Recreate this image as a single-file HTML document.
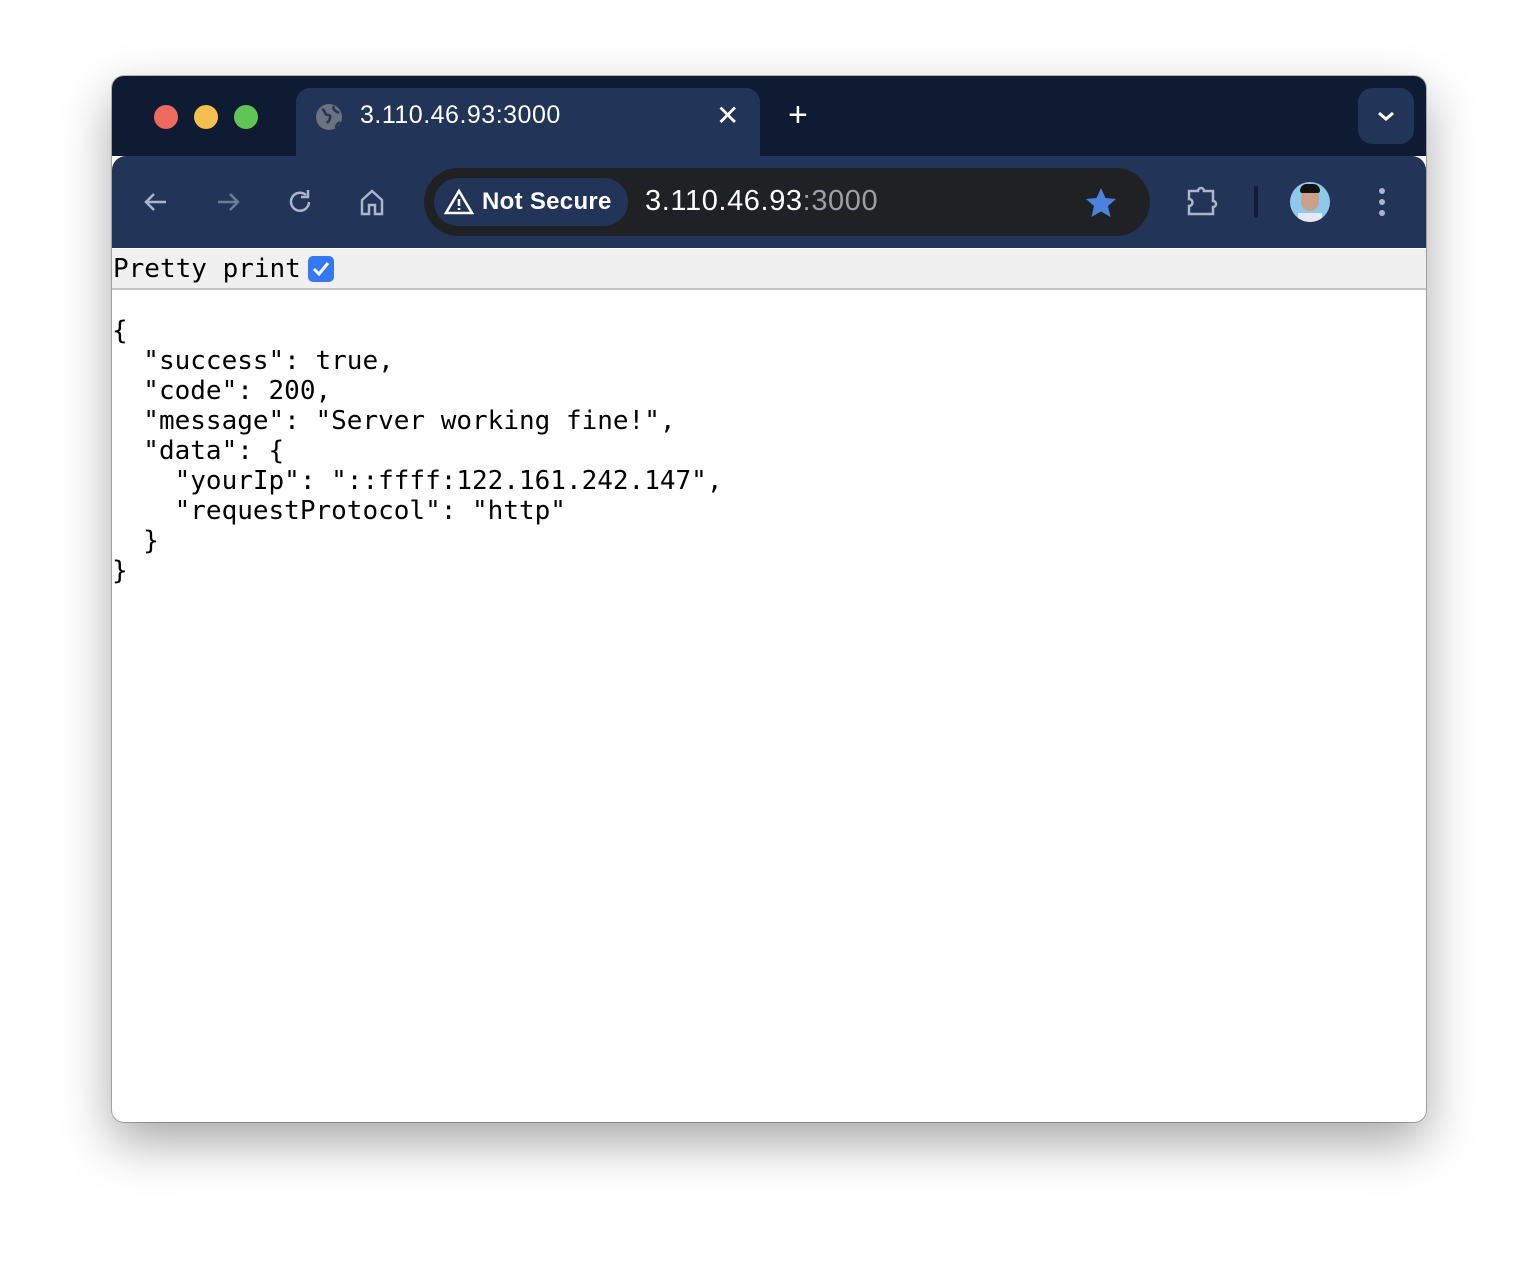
<!DOCTYPE html>
<html><head><style>
body{margin:0;width:1538px;height:1270px;background:#fff;position:relative;overflow:hidden;font-family:"Liberation Sans",sans-serif}
.win{position:absolute;left:112px;top:76px;width:1314px;height:1046px;border-radius:12px;overflow:hidden;box-shadow:0 20px 50px rgba(0,0,0,.35),0 0 0 1px rgba(0,0,0,.25);background:#fff}
.title{position:absolute;left:0;top:0;width:100%;height:80px;background:#0f1a33}
.dot{position:absolute;top:29px;width:24px;height:24px;border-radius:50%}
.tab{position:absolute;left:184px;top:12px;width:464px;height:80px;background:#223457;border-radius:14px 14px 0 0}
.tb{position:absolute;left:0;top:80px;width:100%;height:92px;background:#223457;border-radius:14px 14px 0 0}
.omni{position:absolute;left:312px;top:12px;width:726px;height:68px;background:#202124;border-radius:34px}
.ns{position:absolute;left:10px;top:10px;width:194px;height:48px;background:#223457;border-radius:24px;color:#fff;font-size:24px;font-weight:bold}
.pp{position:absolute;left:0;top:173px;width:100%;height:39px;background:#f0f0f0;border-bottom:2px solid #c4c4c4}
.mono{font-family:"DejaVu Sans Mono",monospace;font-size:26px;color:#000}
pre{margin:0;position:absolute;left:0;top:240px;line-height:30px}
</style></head><body>
<div class="win">
<div class="title">
<div class="dot" style="left:42px;background:#ed6a5e"></div>
<div class="dot" style="left:82px;background:#f5bf4f"></div>
<div class="dot" style="left:122px;background:#61c554"></div>
<div style="position:absolute;right:12px;top:12px;width:56px;height:56px;border-radius:14px;background:#223457"><svg width="56" height="56"><path d="M21 25l7 6 7-6" stroke="#fff" stroke-width="3" fill="none"/></svg></div>
<div style="position:absolute;left:676px;top:20px;color:#fff;font-size:34px">+</div>
</div>
<div class="tab">
<svg style="position:absolute;left:18px;top:14px" width="30" height="30"><circle cx="15" cy="15" r="13" fill="#6b7280"/><path d="M8 7c4 2 2 6 6 6s2 5-1 8M20 4c-2 4 2 5 5 7M22 26c0-4 3-5 4-6" stroke="#223457" stroke-width="2.5" fill="none"/></svg>
<div style="position:absolute;left:64px;top:13px;color:#fff;font-size:25px;letter-spacing:0.5px">3.110.46.93:3000</div>
<div style="position:absolute;left:420px;top:11px;color:#fff;font-size:28px">✕</div>
</div>
<div class="tb">
<svg style="position:absolute;left:28px;top:30px" width="32" height="32"><path d="M26 16H6M14 8l-8 8 8 8" stroke="#aab6cc" stroke-width="2.5" fill="none"/></svg>
<svg style="position:absolute;left:100px;top:30px" width="32" height="32"><path d="M6 16h20M18 8l8 8-8 8" stroke="#6c7d9c" stroke-width="2.5" fill="none"/></svg>
<svg style="position:absolute;left:172px;top:30px" width="32" height="32"><path d="M25 16a9 9 0 1 1-3-7" stroke="#aab6cc" stroke-width="2.5" fill="none"/><path d="M24 4v7h-7" stroke="#aab6cc" stroke-width="2.5" fill="none"/></svg>
<svg style="position:absolute;left:244px;top:30px" width="32" height="32"><path d="M6 28V14l10-9 10 9v14h-7v-9h-6v9z" stroke="#aab6cc" stroke-width="2.5" fill="none"/></svg>
<div class="omni">
<div class="ns"><svg style="position:absolute;left:10px;top:10px" width="30" height="28"><path d="M15 3L2 25h26z" stroke="#fff" stroke-width="2.5" fill="none"/><path d="M15 11v7M15 20v2" stroke="#fff" stroke-width="2.5"/></svg><span style="position:absolute;left:48px;top:10px;letter-spacing:0.3px">Not Secure</span></div>
<div style="position:absolute;left:221px;top:17px;font-size:29px;letter-spacing:0.6px;color:#fff">3.110.46.93<span style="color:#9aa0a6">:3000</span></div>
<svg style="position:absolute;left:660px;top:18px" width="34" height="34"><path d="M17 2l4.5 10 10.5 1-8 7 2.5 11L17 25.5 7.5 31 10 20l-8-7 10.5-1z" fill="#4a82de"/></svg>
</div>
<svg style="position:absolute;left:1072px;top:28px" width="36" height="36"><path d="M5 7h9a3 3 0 0 1 6 0h9v10a3 3 0 0 1 0 6v7H5v-8a3.5 3.5 0 0 0 0-7z" stroke="#aab6cc" stroke-width="2.5" fill="none"/></svg>
<div style="position:absolute;left:1142px;top:30px;width:4px;height:32px;background:#0f1a33;border-radius:2px"></div>
<div style="position:absolute;left:1178px;top:26px;width:40px;height:40px;border-radius:50%;background:#8ec9ea;overflow:hidden"><div style="position:absolute;left:11px;top:5px;width:18px;height:24px;border-radius:9px;background:#c9a08a"></div><div style="position:absolute;left:10px;top:2px;width:20px;height:9px;border-radius:9px 9px 3px 3px;background:#111"></div><div style="position:absolute;left:8px;top:31px;width:24px;height:12px;background:#e8e8f0"></div></div>
<svg style="position:absolute;left:1258px;top:30px" width="24" height="34"><circle cx="12" cy="5" r="3" fill="#aab6cc"/><circle cx="12" cy="16" r="3" fill="#aab6cc"/><circle cx="12" cy="27" r="3" fill="#aab6cc"/></svg>
</div>
<div class="pp"><span class="mono" style="position:absolute;left:1px;top:5px">Pretty print</span>
<div style="position:absolute;left:196px;top:7px;width:26px;height:26px;border-radius:5px;background:#3478f6"><svg width="26" height="26"><path d="M6 13l5 5 9-11" stroke="#fff" stroke-width="3" fill="none"/></svg></div></div>
<pre class="mono">{
  "success": true,
  "code": 200,
  "message": "Server working fine!",
  "data": {
    "yourIp": "::ffff:122.161.242.147",
    "requestProtocol": "http"
  }
}</pre>
</div>
</body></html>
